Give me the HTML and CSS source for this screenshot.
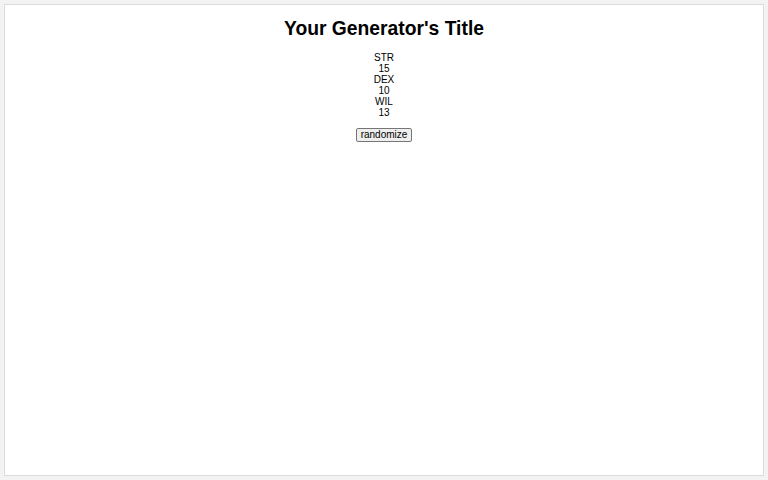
FILE: index.html
```html
<!DOCTYPE html>
<html>
<head>
<meta charset="utf-8">
<link rel="stylesheet" href="styles.css">
</head>
<body>
<div class="card">
  <h1 class="title">Your Generator's Title</h1>
  <div class="stats">
    <div>STR</div>
    <div>15</div>
    <div>DEX</div>
    <div>10</div>
    <div>WIL</div>
    <div>13</div>
  </div>
  <button class="btn">randomize</button>
</div>
</body>
</html>
```
FILE: styles.css
```css
html, body {
  margin: 0;
  padding: 0;
  height: 100%;
}
body {
  background: #f3f3f3;
  padding: 4px;
  box-sizing: border-box;
  font-family: "Liberation Sans", Arial, sans-serif;
}
.card {
  background: #fff;
  border: 1px solid #dcdcdc;
  height: 100%;
  box-sizing: border-box;
  display: flex;
  flex-direction: column;
  align-items: center;
}
.title {
  font-size: 19.3px;
  font-weight: bold;
  margin: 12px 0 12px;
  line-height: 23px;
  color: #000;
}
.stats {
  font-size: 10px;
  line-height: 11px;
  text-align: center;
  color: #000;
}
.btn {
  margin-top: 10px;
  font-family: "Liberation Sans", Arial, sans-serif;
  font-size: 10px;
  line-height: 12px;
  padding: 0 4px;
  background: #efefef;
  border: 1px solid #767676;
  border-radius: 2px;
  color: #000;
}
```
